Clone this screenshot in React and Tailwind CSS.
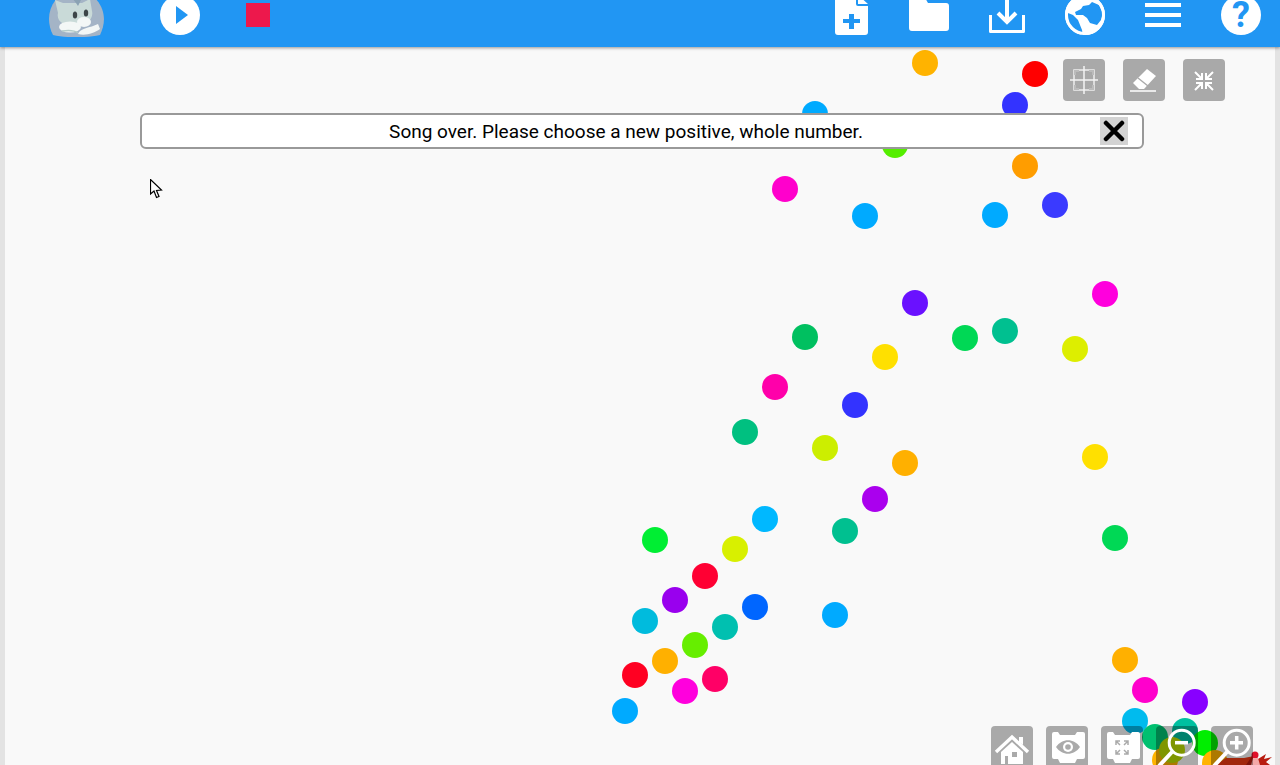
const dots = [
  [925, 63, '#ffb300'], [1035, 74, '#ff0000'], [815, 114, '#00aaff'], [1015, 105, '#3333ff'],
  [895, 145, '#55ee00'], [1025, 166, '#ff9d00'], [785, 189, '#ff00cc'], [865, 216, '#00aaff'],
  [995, 215, '#00aaff'], [1055, 205, '#3a3aff'], [915, 303, '#6a11ff'], [1105, 294, '#ff00dd'],
  [805, 337, '#00c060'], [965, 338, '#00d855'], [1005, 331, '#00c090'], [885, 357, '#ffe000'],
  [1075, 349, '#ddee00'], [775, 387, '#ff00aa'], [855, 405, '#3333ff'], [745, 432, '#00c080'],
  [825, 448, '#ccee00'], [905, 463, '#ffb000'], [1095, 457, '#ffe000'], [875, 499, '#aa00ee'],
  [765, 519, '#00b8ff'], [845, 531, '#00c090'], [655, 540, '#00ee33'], [1115, 538, '#00d855'],
  [735, 549, '#d8f000'], [705, 576, '#ff0033'], [675, 600, '#9900ee'], [755, 607, '#0066ff'],
  [645, 621, '#00bbdd'], [835, 615, '#00aaff'], [725, 627, '#00c0b0'], [695, 645, '#66ee00'],
  [665, 661, '#ffb000'], [635, 675, '#ff0022'], [715, 679, '#ff0066'], [685, 691, '#ff00dd'],
  [625, 711, '#00aaff'], [1125, 660, '#ffb000'], [1145, 690, '#ff00cc'], [1195, 702, '#8800ff'],
  [1135, 721, '#00bbee'], [1185, 731, '#00c0a0'], [1155, 737, '#00c070'], [1205, 743, '#00ee00'],
  [1165, 760, '#ffb300'], [1172, 750, '#bbdd00'], [1215, 763, '#ffb300'],
];

const FRAME = 'M8 6 H12 L14 9 H29 L31 6 H37 a2 2 0 0 1 2 2 V31 a2 2 0 0 1 -2 2 H31 L29 37 H14 L12 33 H8 a2 2 0 0 1 -2 -2 V8 a2 2 0 0 1 2 -2 Z';

function HeaderIcon({ width, children }) {
  return (
    <svg width={width} height="40" viewBox={`0 0 ${width} 40`} className="shrink-0 fill-white">
      {children}
    </svg>
  );
}

function ToolButton({ children }) {
  return (
    <div className="w-[42px] h-[42px] rounded-[4px] bg-black/[0.32] flex items-center justify-center shrink-0">
      <svg width="42" height="42" viewBox="0 0 42 42" fill="none">
        {children}
      </svg>
    </div>
  );
}

export default function App() {
  return (
    <div className="relative w-[1280px] h-[765px] overflow-hidden bg-[#e3e3e3] font-['Roboto',sans-serif]">
      <div className="absolute left-[5px] right-[5px] top-0 bottom-0 bg-[#f9f9f9]" />

      {/* sprite dots */}
      {dots.map(([x, y, color]) => (
        <div
          key={`${x}-${y}`}
          className="absolute w-[26px] h-[26px] rounded-full"
          style={{ left: x - 13, top: y - 13, background: color }}
        />
      ))}

      {/* turtle sprite in the corner */}
      <svg width="72" height="20" viewBox="0 0 72 20" className="absolute left-[1208px] top-[745px]">
        <path d="M8 20 L18 13 L36 13 L46 11 L50 20 Z" fill="#ee3a14" />
        <path d="M38 20 L44 11 L50 14 L58 9 L56 14 L64 12 L58 17 L62 20 Z" fill="#b81c10" />
        <circle cx="47" cy="10" r="3.5" fill="#e0102a" />
        <path d="M43 20 L45 13 L50 13 L52 20 Z" fill="#f4a8a8" />
      </svg>

      {/* top bar */}
      <header className="absolute top-0 left-0 right-0 h-[47px] bg-[#2196f3] shadow-[0_1px_3px_rgba(0,0,0,0.4)] overflow-hidden">
        <div className="flex items-start -mt-[5px]">
          <svg width="58" height="42" viewBox="0 0 58 42" className="ml-[48px] shrink-0">
            <path d="M5 40 C-1 28 -1 14 10 2 L46 2 C58 14 58 28 52 40 C38 43 18 43 5 40 Z" fill="#a4b4c6" />
            <path d="M7 5 L15 8 L34 8 L42 4 L44 16 C46 24 38 31 26 31 C16 31 8 26 10 18 Z" fill="#c9dad8" />
            <path d="M24 3 L34 3 L30 11 L28 8 Z" fill="#8ba3b4" />
            <ellipse cx="27" cy="20" rx="2.2" ry="3.5" fill="#3d4548" />
            <ellipse cx="38" cy="18" rx="2.2" ry="3.5" fill="#3d4548" />
            <ellipse cx="36" cy="27" rx="7" ry="5" fill="#f3f7f6" />
            <ellipse cx="22" cy="32" rx="11" ry="5.5" fill="#f3f7f6" />
            <path d="M30 39 C32 33 42 33 50 29 L52 34 C46 38 38 41 30 39 Z" fill="#f3f7f6" />
            <path d="M14 36 C20 35 26 35 30 38" stroke="#b4cbc8" strokeWidth="1.5" fill="none" />
          </svg>
          <div className="ml-[54px] w-10 h-10 rounded-full bg-white flex items-center justify-center shrink-0">
            <svg width="12" height="18" viewBox="0 0 12 18" className="ml-[3px]">
              <path d="M0 0 L12 9 L0 18 Z" fill="#2196f3" />
            </svg>
          </div>
          <div className="ml-[46px] mt-[8px] w-6 h-6 bg-[#ed184c] shrink-0" />

          <div className="ml-auto flex items-start mr-[19px]">
            <div className="relative w-[33px] h-10 shrink-0">
              <HeaderIcon width={33}>
                <path d="M3 0 H21 V9 a2 2 0 0 0 2 2 H33 V37 a3 3 0 0 1 -3 3 H3 a3 3 0 0 1 -3 -3 V3 a3 3 0 0 1 3 -3 Z M23 0 L33 9 H23 Z" />
                <path d="M14 19 H19 V24 H25 V28 H19 V34 H14 V28 H8 V24 H14 Z" className="fill-[#2196f3]" />
              </HeaderIcon>
            </div>
            <div className="ml-[41px]">
              <HeaderIcon width={40}>
                <path d="M3 1 H15 L19 8 H37 a3 3 0 0 1 3 3 V33 a3 3 0 0 1 -3 3 H3 a3 3 0 0 1 -3 -3 V4 a3 3 0 0 1 3 -3 Z" />
              </HeaderIcon>
            </div>
            <div className="ml-[40px]">
              <HeaderIcon width={36}>
                <path d="M1.5 20 V36.5 H34.5 V20" className="fill-none" stroke="white" strokeWidth="3" strokeLinejoin="round" />
                <path d="M18 3 V26 M9 18 L18 27 L27 18" className="fill-none" stroke="white" strokeWidth="4" />
              </HeaderIcon>
            </div>
            <div className="ml-[40px]">
              <HeaderIcon width={40}>
                <circle cx="20" cy="20" r="20" />
                <path d="M27 7 L24 10 L18 11 L16 14 L10 17 L11 20 L18 20 L22 23 L25 28 L32 30 L36 25 L38 18 L34 10 Z" className="fill-[#2196f3]" />
                <path d="M3 18 L8 20 L13 25 L15 30 L17 35 L18 41 L12 37 L5 30 L2 23 Z" className="fill-[#2196f3]" />
                <circle cx="20" cy="20" r="18.5" className="fill-none" stroke="white" strokeWidth="3" />
              </HeaderIcon>
            </div>
            <div className="ml-[40px]">
              <HeaderIcon width={36}>
                <path d="M0 8 H36 V12 H0 Z M0 18 H36 V22 H0 Z M0 28 H36 V32 H0 Z" />
              </HeaderIcon>
            </div>
            <div className="ml-[40px] w-10 h-10 rounded-full bg-white flex justify-center shrink-0 pt-[6px]">
              <span className="font-bold text-[36px] leading-[28px] text-[#2196f3]">?</span>
            </div>
          </div>
        </div>
      </header>

      {/* top right tools */}
      <div className="absolute left-[1063px] top-[59px] flex gap-[18px]">
        <ToolButton>
          <rect x="11" y="11" width="20" height="20" stroke="#eeeeee" strokeWidth="1.5" />
          <path d="M21 7 V35 M7 21 H35" stroke="#f4f4f4" strokeWidth="1.5" />
          <path d="M12 16 V12 H16 M26 12 H30 V16 M12 26 V30 H16 M26 30 H30 V26" stroke="#bbbbbb" strokeWidth="2" />
        </ToolButton>
        <ToolButton>
          <path d="M10 24 L24 10 L33 17 L21 30 H16 Z" fill="white" />
          <path d="M15 19 L25 27" stroke="#aaa" strokeWidth="1.5" />
          <path d="M7 32 H33" stroke="white" strokeWidth="1.5" />
        </ToolButton>
        <ToolButton>
          <path d="M12 13 L18 19 M19 14 V20 H13 M30 13 L24 19 M23 14 V20 H29 M12 31 L18 25 M19 30 V24 H13 M30 31 L24 25 M23 30 V24 H29" stroke="white" strokeWidth="2" />
        </ToolButton>
      </div>

      {/* bottom right tools */}
      <div className="absolute left-[991px] top-[726px] flex gap-[13px]">
        <ToolButton>
          <path d="M5 26 L21 11 L37 26" stroke="white" strokeWidth="3.4" />
          <path d="M28 11 H32 V19 L28 16 Z" fill="white" />
          <path d="M10 26 L21 16 L32 26 V38 H10 Z" fill="white" />
          <rect x="21" y="26" width="5" height="5" fill="#aaa" />
          <rect x="14" y="30" width="3" height="8" fill="#aaa" />
        </ToolButton>
        <ToolButton>
          <path d={FRAME} fill="white" />
          <path d="M10 21 C16 12 28 12 34 21 C28 30 16 30 10 21 Z" fill="#aaa" />
          <circle cx="22" cy="21" r="5" fill="white" />
          <circle cx="22" cy="21" r="2.8" fill="#aaa" />
        </ToolButton>
        <ToolButton>
          <path d={FRAME} fill="white" />
          <path d="M15 15 L19 19 M15 19 V15 H19 M27 15 L23 19 M23 15 H27 V19 M15 28 L19 24 M15 24 V28 H19 M27 28 L23 24 M23 28 H27 V24" stroke="#aaa" strokeWidth="1.5" />
        </ToolButton>
        <ToolButton>
          <circle cx="25.7" cy="16.7" r="12.5" stroke="white" strokeWidth="3" />
          <path d="M16 26 L3 40" stroke="white" strokeWidth="4" />
          <path d="M19 16.7 H32" stroke="white" strokeWidth="3.5" />
        </ToolButton>
        <ToolButton>
          <circle cx="25.7" cy="16.7" r="12.5" stroke="white" strokeWidth="3" />
          <path d="M16 26 L3 40" stroke="white" strokeWidth="4" />
          <path d="M19 16.7 H32 M25.7 10 V23.5" stroke="white" strokeWidth="3.5" />
        </ToolButton>
      </div>

      {/* song over message */}
      <div className="absolute left-[140px] top-[113px] w-[1004px] h-9 bg-white border-2 border-[#999] rounded-[6px] flex items-center pl-[10px] pr-[14px]">
        <p className="flex-1 text-center text-[19px] leading-none pt-px text-black">
          Song over. Please choose a new positive, whole number.
        </p>
        <div className="w-7 h-7 bg-[#d3d3d3] flex items-center justify-center shrink-0">
          <svg width="22" height="22" viewBox="0 0 22 22">
            <path d="M3 3 L19 19 M19 3 L3 19" stroke="black" strokeWidth="4.5" strokeLinecap="round" />
          </svg>
        </div>
      </div>

      {/* mouse pointer */}
      <svg width="14" height="20" viewBox="0 0 14 20" className="absolute left-[150px] top-[179px]">
        <path d="M0.5 0.5 V15 L4 12 L6.5 18.5 L9 17.5 L6.5 11.5 L11.5 11 Z" fill="white" stroke="black" strokeWidth="1.2" />
      </svg>
    </div>
  );
}
